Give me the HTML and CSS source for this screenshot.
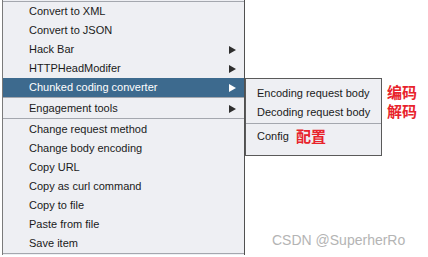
FILE: index.html
```html
<!DOCTYPE html>
<html>
<head>
<meta charset="utf-8">
<link rel="stylesheet" href="styles.css">
</head>
<body>
<div class="stage">
  <div class="menu">
    <div class="sep"></div>
    <div class="item">Convert to XML</div>
    <div class="item">Convert to JSON</div>
    <div class="item sub">Hack Bar<span class="arrow"></span></div>
    <div class="item sub">HTTPHeadModifer<span class="arrow"></span></div>
    <div class="item sub active">Chunked coding converter<span class="arrow"></span></div>
    <div class="sep"></div>
    <div class="item sub">Engagement tools<span class="arrow"></span></div>
    <div class="sep"></div>
    <div class="item">Change request method</div>
    <div class="item">Change body encoding</div>
    <div class="item">Copy URL</div>
    <div class="item">Copy as curl command</div>
    <div class="item">Copy to file</div>
    <div class="item">Paste from file</div>
    <div class="item">Save item</div>
    <div class="sep"></div>
  </div>
  <div class="submenu">
    <div class="item">Encoding request body</div>
    <div class="item">Decoding request body</div>
    <div class="sep"></div>
    <div class="item">Config</div>
  </div>
  <div class="note note-enc">编码</div>
  <div class="note note-dec">解码</div>
  <div class="note note-cfg">配置</div>
  <div class="watermark">CSDN @SuperherRo</div>
</div>
</body>
</html>
```
FILE: styles.css
```css
html, body {
  margin: 0;
  padding: 0;
  background: #ffffff;
}
.stage {
  position: relative;
  width: 428px;
  height: 257px;
  overflow: hidden;
  font-family: "Liberation Sans", Arial, sans-serif;
  font-size: 11px;
  color: #1a1a1a;
}
.menu {
  margin-left: 2px;
  width: 241px;
  background: #eeeff3;
  border-left: 1px solid #7a7a7a;
  border-right: 1px solid #505050;
  display: flex;
  flex-direction: column;
}
.sep {
  height: 1px;
  border-top: 1px solid #a4a7ae;
  flex: none;
}
.menu > .sep:first-child {
  height: 0;
  margin-top: 1px;
}
.item {
  height: 19px;
  line-height: 19px;
  padding-left: 26px;
  display: flex;
  align-items: center;
  position: relative;
  flex: none;
}
.item.active {
  background: #3d6a8e;
  color: #ffffff;
}
.arrow {
  position: absolute;
  right: 8px;
  top: 6px;
  width: 0;
  height: 0;
  border-top: 4px solid transparent;
  border-bottom: 4px solid transparent;
  border-left: 7px solid #2e2e2e;
}
.item.active .arrow {
  border-left-color: #ffffff;
}
.submenu {
  position: absolute;
  left: 245px;
  top: 78px;
  width: 135px;
  height: 71px;
  background: #eeeff3;
  border: 1px solid #5a5a5a;
  padding-top: 5px;
  box-sizing: content-box;
  display: flex;
  flex-direction: column;
}
.submenu .item {
  padding-left: 11px;
}
.submenu .sep {
  margin: 1px 0 2px;
}
.note {
  position: absolute;
  color: #e8232b;
  font-family: "Noto Sans CJK SC", sans-serif;
  font-weight: bold;
  font-size: 15px;
  line-height: 17px;
  height: 17px;
}
.note-enc { left: 387px; top: 83px; }
.note-dec { left: 387px; top: 102px; }
.note-cfg { left: 296px; top: 127px; }
.watermark {
  position: absolute;
  left: 272px;
  top: 232px;
  font-family: "Liberation Sans", Arial, sans-serif;
  font-size: 14px;
  color: #b4b4b4;
}
```
